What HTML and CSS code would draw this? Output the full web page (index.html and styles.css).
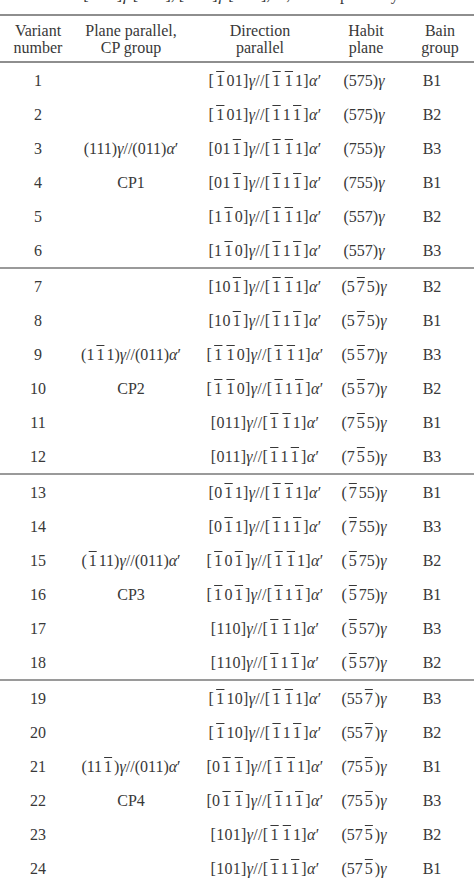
FILE: index.html
```html
<!DOCTYPE html>
<html lang="en">
<head>
<meta charset="utf-8">
<title>Variants</title>
<link rel="stylesheet" href="styles.css">
</head>
<body>
<div class="caption"><div class="caption-line">[<span class="b">1</span>01]<i>γ</i>/[<span class="b">1</span>11], [01<span class="b">1</span>]<i>γ</i>/[<span class="b">1</span>11], <i>α</i>′, and respectively</div></div>
<table class="variants">
<colgroup>
<col class="c1"><col class="c2"><col class="c3"><col class="c4"><col class="c5">
</colgroup>
<thead>
<tr>
<th>Variant<br>number</th>
<th>Plane parallel,<br>CP group</th>
<th>Direction<br>parallel</th>
<th class="hp">Habit<br>plane</th>
<th class="bg">Bain<br>group</th>
</tr>
</thead>
<tbody>
<tr><td>1</td><td></td><td>[<span class="b">1</span>01]<i>γ</i>//[<span class="b">1</span><span class="b">1</span>1]<i>α</i>′</td><td>(575)<i>γ</i></td><td>B1</td></tr>
<tr><td>2</td><td></td><td>[<span class="b">1</span>01]<i>γ</i>//[<span class="b">1</span>1<span class="b">1</span>]<i>α</i>′</td><td>(575)<i>γ</i></td><td>B2</td></tr>
<tr><td>3</td><td>(111)<i>γ</i>//(011)<i>α</i>′</td><td>[01<span class="b">1</span>]<i>γ</i>//[<span class="b">1</span><span class="b">1</span>1]<i>α</i>′</td><td>(755)<i>γ</i></td><td>B3</td></tr>
<tr><td>4</td><td>CP1</td><td>[01<span class="b">1</span>]<i>γ</i>//[<span class="b">1</span>1<span class="b">1</span>]<i>α</i>′</td><td>(755)<i>γ</i></td><td>B1</td></tr>
<tr><td>5</td><td></td><td>[1<span class="b">1</span>0]<i>γ</i>//[<span class="b">1</span><span class="b">1</span>1]<i>α</i>′</td><td>(557)<i>γ</i></td><td>B2</td></tr>
<tr><td>6</td><td></td><td>[1<span class="b">1</span>0]<i>γ</i>//[<span class="b">1</span>1<span class="b">1</span>]<i>α</i>′</td><td>(557)<i>γ</i></td><td>B3</td></tr>
</tbody>
<tbody>
<tr><td>7</td><td></td><td>[10<span class="b">1</span>]<i>γ</i>//[<span class="b">1</span><span class="b">1</span>1]<i>α</i>′</td><td>(5<span class="b">7</span>5)<i>γ</i></td><td>B2</td></tr>
<tr><td>8</td><td></td><td>[10<span class="b">1</span>]<i>γ</i>//[<span class="b">1</span>1<span class="b">1</span>]<i>α</i>′</td><td>(5<span class="b">7</span>5)<i>γ</i></td><td>B1</td></tr>
<tr><td>9</td><td>(1<span class="b">1</span>1)<i>γ</i>//(011)<i>α</i>′</td><td>[<span class="b">1</span><span class="b">1</span>0]<i>γ</i>//[<span class="b">1</span><span class="b">1</span>1]<i>α</i>′</td><td>(5<span class="b">5</span>7)<i>γ</i></td><td>B3</td></tr>
<tr><td>10</td><td>CP2</td><td>[<span class="b">1</span><span class="b">1</span>0]<i>γ</i>//[<span class="b">1</span>1<span class="b">1</span>]<i>α</i>′</td><td>(5<span class="b">5</span>7)<i>γ</i></td><td>B2</td></tr>
<tr><td>11</td><td></td><td>[011]<i>γ</i>//[<span class="b">1</span><span class="b">1</span>1]<i>α</i>′</td><td>(7<span class="b">5</span>5)<i>γ</i></td><td>B1</td></tr>
<tr><td>12</td><td></td><td>[011]<i>γ</i>//[<span class="b">1</span>1<span class="b">1</span>]<i>α</i>′</td><td>(7<span class="b">5</span>5)<i>γ</i></td><td>B3</td></tr>
</tbody>
<tbody>
<tr><td>13</td><td></td><td>[0<span class="b">1</span>1]<i>γ</i>//[<span class="b">1</span><span class="b">1</span>1]<i>α</i>′</td><td>(<span class="b">7</span>55)<i>γ</i></td><td>B1</td></tr>
<tr><td>14</td><td></td><td>[0<span class="b">1</span>1]<i>γ</i>//[<span class="b">1</span>1<span class="b">1</span>]<i>α</i>′</td><td>(<span class="b">7</span>55)<i>γ</i></td><td>B3</td></tr>
<tr><td>15</td><td>(<span class="b">1</span>11)<i>γ</i>//(011)<i>α</i>′</td><td>[<span class="b">1</span>0<span class="b">1</span>]<i>γ</i>//[<span class="b">1</span><span class="b">1</span>1]<i>α</i>′</td><td>(<span class="b">5</span>75)<i>γ</i></td><td>B2</td></tr>
<tr><td>16</td><td>CP3</td><td>[<span class="b">1</span>0<span class="b">1</span>]<i>γ</i>//[<span class="b">1</span>1<span class="b">1</span>]<i>α</i>′</td><td>(<span class="b">5</span>75)<i>γ</i></td><td>B1</td></tr>
<tr><td>17</td><td></td><td>[110]<i>γ</i>//[<span class="b">1</span><span class="b">1</span>1]<i>α</i>′</td><td>(<span class="b">5</span>57)<i>γ</i></td><td>B3</td></tr>
<tr><td>18</td><td></td><td>[110]<i>γ</i>//[<span class="b">1</span>1<span class="b">1</span>]<i>α</i>′</td><td>(<span class="b">5</span>57)<i>γ</i></td><td>B2</td></tr>
</tbody>
<tbody>
<tr><td>19</td><td></td><td>[<span class="b">1</span>10]<i>γ</i>//[<span class="b">1</span><span class="b">1</span>1]<i>α</i>′</td><td>(55<span class="b">7</span>)<i>γ</i></td><td>B3</td></tr>
<tr><td>20</td><td></td><td>[<span class="b">1</span>10]<i>γ</i>//[<span class="b">1</span>1<span class="b">1</span>]<i>α</i>′</td><td>(55<span class="b">7</span>)<i>γ</i></td><td>B2</td></tr>
<tr><td>21</td><td>(11<span class="b">1</span>)<i>γ</i>//(011)<i>α</i>′</td><td>[0<span class="b">1</span><span class="b">1</span>]<i>γ</i>//[<span class="b">1</span><span class="b">1</span>1]<i>α</i>′</td><td>(75<span class="b">5</span>)<i>γ</i></td><td>B1</td></tr>
<tr><td>22</td><td>CP4</td><td>[0<span class="b">1</span><span class="b">1</span>]<i>γ</i>//[<span class="b">1</span>1<span class="b">1</span>]<i>α</i>′</td><td>(75<span class="b">5</span>)<i>γ</i></td><td>B3</td></tr>
<tr><td>23</td><td></td><td>[101]<i>γ</i>//[<span class="b">1</span><span class="b">1</span>1]<i>α</i>′</td><td>(57<span class="b">5</span>)<i>γ</i></td><td>B2</td></tr>
<tr><td>24</td><td></td><td>[101]<i>γ</i>//[<span class="b">1</span>1<span class="b">1</span>]<i>α</i>′</td><td>(57<span class="b">5</span>)<i>γ</i></td><td>B1</td></tr>
</tbody>
</table>
</body>
</html>
```
FILE: styles.css
```css
html, body {
  margin: 0;
  padding: 0;
  background: #ffffff;
}
body {
  width: 474px;
  height: 885px;
  overflow: hidden;
  font-family: "Liberation Serif", "Times New Roman", serif;
  font-size: 16px;
  color: #383838;
}
.caption {
  height: 6px;
  overflow: hidden;
  display: flex;
  align-items: flex-end;
  justify-content: center;
}
.caption-line {
  line-height: 18px;
  height: 18px;
  flex: none;
  white-space: nowrap;
  margin-bottom: 2px;
  margin-left: 8px;
}
.variants {
  margin-top: 8px;
  width: 474px;
  border-collapse: collapse;
  table-layout: fixed;
  border-top: 2px solid #8e8e8e;
}
.c1 { width: 76px; }
.c2 { width: 110px; }
.c3 { width: 148px; }
.c4 { width: 60px; }
.c5 { width: 80px; }
.variants th {
  font-weight: normal;
  line-height: 17px;
  padding: 6px 0 5px;
  text-align: center;
  white-space: nowrap;
}
.variants th.hp { padding-left: 4px; }
.variants th.bg { padding-left: 12px; }
.variants thead tr {
  border-bottom: 2px solid #8e8e8e;
}
.variants tbody {
  border-bottom: 2px solid #9a9a9a;
}
.variants tbody:last-child {
  border-bottom: none;
}
.variants td {
  height: 34px;
  padding: 0;
  line-height: 32px;
  padding-top: 2px;
  box-sizing: border-box;
  text-align: center;
  white-space: nowrap;
  vertical-align: top;
}
.variants td:nth-child(3) {
  padding-left: 10px;
  letter-spacing: 0.3px;
}
.variants td:nth-child(5) {
  padding-right: 4px;
}
i {
  font-style: italic;
}
.b {
  text-decoration: overline;
  text-decoration-thickness: 1px;
  margin: 0 2px;
}
```
